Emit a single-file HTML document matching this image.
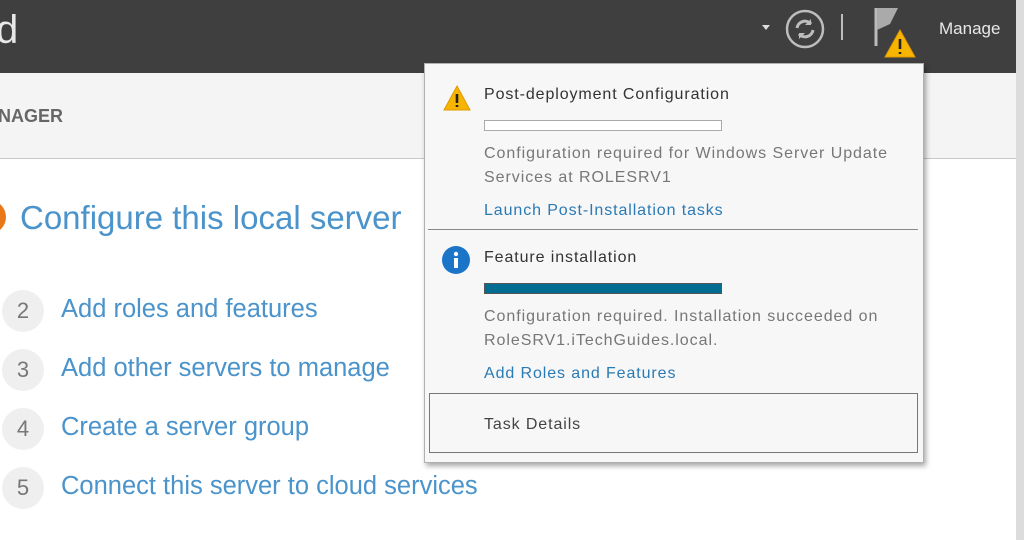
<!DOCTYPE html>
<html><head><meta charset="utf-8"><style>
*{margin:0;padding:0;box-sizing:border-box}
body{width:1024px;height:540px;overflow:hidden;background:#fff;font-family:"Liberation Sans",sans-serif;position:relative}
.a{position:absolute;white-space:nowrap}
.top{left:0;top:0;width:1024px;height:73px;background:#3f3f3f}
.band{left:0;top:73px;width:1016px;height:86px;background:#f4f4f4;border-bottom:1px solid #c8c8c8}
.strip{left:1016px;top:0;width:8px;height:540px;background:#dcdcdc}
.num{width:42px;height:42px;border-radius:50%;background:#efefef;color:#777;font-size:22px;text-align:center;line-height:42px;left:2px}
.item{left:61px;font-size:25.5px;color:#4a93cb}
.pop{left:424px;top:63px;width:500px;height:400px;background:#f7f7f7;border:1px solid #b0b0b0;box-shadow:2px 3px 5px rgba(0,0,0,.35)}
.pt{font-size:16px;color:#333;letter-spacing:0.9px}
.pg{font-size:16px;color:#777;line-height:24px;letter-spacing:0.95px}
.pl{font-size:16px;color:#2a7ab5;letter-spacing:0.9px}
</style></head><body>
<div class="a top"></div>
<div class="a" style="left:-4px;top:8px;font-size:40px;color:#e8e8e8">d</div>
<svg class="a" style="left:760px;top:22px" width="12" height="10"><path d="M2 3h8l-4 5z" fill="#ddd"/></svg>
<svg class="a" style="left:784px;top:8px" width="42" height="42" viewBox="0 0 42 42"><circle cx="21" cy="21" r="18" fill="none" stroke="#bdbdbd" stroke-width="2.5"/><path d="M13 20a8 8 0 0 1 14-4M29 22a8 8 0 0 1-14 4" fill="none" stroke="#bdbdbd" stroke-width="3"/><path d="M27 11v6h-6zM15 31v-6h6z" fill="#bdbdbd"/></svg>
<div class="a" style="left:841px;top:14px;width:2px;height:26px;background:#bdbdbd"></div>
<svg class="a" style="left:872px;top:6px" width="50" height="56" viewBox="0 0 50 56"><path d="M4 2v38" stroke="#bbb" stroke-width="3"/><path d="M5 2h21l-8 16L5 24z" fill="#aaa"/><path d="M28 24l15 27H13z" fill="#f7b500" stroke="#e09a00"/><path d="M28 33v10M28 46v2" stroke="#222" stroke-width="2.6"/></svg>
<div class="a" style="left:939px;top:19px;font-size:17px;color:#e8e8e8">Manage</div>
<div class="a band"></div>
<div class="a strip"></div>
<div class="a" style="left:-2px;top:106px;font-size:18px;font-weight:bold;color:#666">NAGER</div>
<div class="a" style="left:-28px;top:200px;width:34px;height:34px;border-radius:50%;background:#e8781a"></div>
<div class="a" style="left:20px;top:199px;font-size:33px;color:#4a93cb">Configure this local server</div>
<div class="a num" style="top:290px">2</div><div class="a item" style="top:295px">Add roles and features</div>
<div class="a num" style="top:349px">3</div><div class="a item" style="top:354px">Add other servers to manage</div>
<div class="a num" style="top:408px">4</div><div class="a item" style="top:413px">Create a server group</div>
<div class="a num" style="top:467px">5</div><div class="a item" style="top:472px">Connect this server to cloud services</div>
<div class="a pop"></div>
<svg class="a" style="left:442px;top:84px" width="30" height="28" viewBox="0 0 30 28"><path d="M15 2l13 24H2z" fill="#f7b500" stroke="#e09a00"/><path d="M15 10v9M15 21v2" stroke="#222" stroke-width="2.6"/></svg>
<div class="a pt" style="left:484px;top:86px">Post-deployment Configuration</div>
<div class="a" style="left:484px;top:120px;width:238px;height:11px;background:#fff;border:1px solid #aaa"></div>
<div class="a pg" style="left:484px;top:142px">Configuration required for Windows Server Update<br>Services at ROLESRV1</div>
<div class="a pl" style="left:484px;top:202px">Launch Post-Installation tasks</div>
<div class="a" style="left:428px;top:229px;width:490px;height:1px;background:#888"></div>
<svg class="a" style="left:442px;top:246px" width="30" height="30"><circle cx="14" cy="14" r="14" fill="#1a74c8"/><rect x="12" y="12" width="4" height="10" fill="#fff"/><circle cx="14" cy="8" r="2.2" fill="#fff"/></svg>
<div class="a pt" style="left:484px;top:249px">Feature installation</div>
<div class="a" style="left:484px;top:283px;width:238px;height:11px;background:#026d91;border:1px solid #555"></div>
<div class="a pg" style="left:484px;top:305px">Configuration required. Installation succeeded on<br>RoleSRV1.iTechGuides.local.</div>
<div class="a pl" style="left:484px;top:365px">Add Roles and Features</div>
<div class="a" style="left:429px;top:393px;width:489px;height:60px;border:1px solid #777;background:#f7f7f7"></div>
<div class="a pt" style="left:484px;top:416px;color:#444">Task Details</div>
</body></html>
